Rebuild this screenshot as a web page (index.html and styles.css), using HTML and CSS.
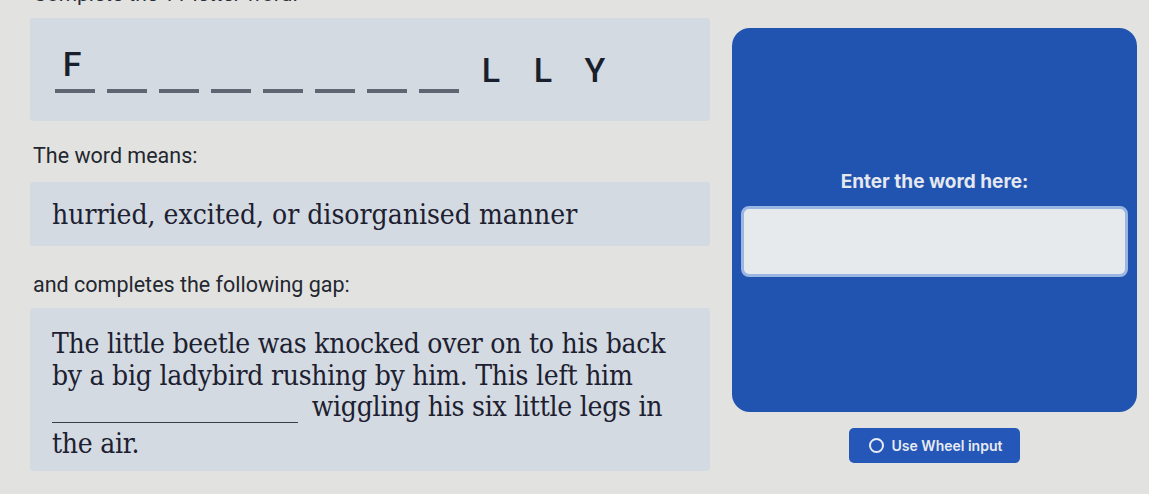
FILE: index.html
```html
<!DOCTYPE html>
<html lang="en">
<head>
<meta charset="utf-8">
<title>Word puzzle</title>
<link rel="stylesheet" href="styles.css">
</head>
<body>
<main class="page">
  <section class="left">
    <p class="intro">Complete the 11-letter word.</p>
    <div class="box word-box">
      <div class="slots">
        <span class="slot given first dashed">F</span>
        <span class="slot dashed"></span>
        <span class="slot dashed"></span>
        <span class="slot dashed"></span>
        <span class="slot dashed"></span>
        <span class="slot dashed"></span>
        <span class="slot dashed"></span>
        <span class="slot dashed"></span>
        <span class="slot given low">L</span>
        <span class="slot given low">L</span>
        <span class="slot given low">Y</span>
      </div>
    </div>
    <p class="label means">The word means:</p>
    <div class="box meaning">hurried, excited, or disorganised manner</div>
    <p class="label gap-label">and completes the following gap:</p>
    <div class="box passage">The little beetle was knocked over on to his back by a big ladybird rushing by him. This left him <span class="blank"></span> wiggling his six little legs in the air.</div>
  </section>
  <section class="right">
    <div class="panel">
      <label class="enter-label" for="answer">Enter the word here:</label>
      <input id="answer" class="answer" type="text" autocomplete="off">
    </div>
    <button class="wheel-btn" type="button"><span class="ring"></span>Use Wheel input</button>
  </section>
</main>
</body>
</html>
```

FILE: styles.css
```css
* { box-sizing: border-box; }
html, body { margin: 0; padding: 0; }
body {
  background: #e2e3e1;
  font-family: Roboto, "Liberation Sans", sans-serif;
  color: #1d2030;
  width: 1149px;
  height: 494px;
  overflow: hidden;
}
.page {
  display: grid;
  grid-template-columns: 680px 405px;
  column-gap: 22px;
  padding-left: 30px;
}
.left {
  display: flex;
  flex-direction: column;
}
.intro {
  margin: -16px 0 0 3px;
  font-size: 21px;
  line-height: 20px;
  height: 20px;
  color: #2a2d36;
}
.box {
  background: #d3dae1;
  border-radius: 3px;
}
.word-box {
  margin-top: 14px;
  height: 103px;
  padding: 28px 0 0 25px;
}
.slots {
  display: flex;
  gap: 12px;
  align-items: flex-start;
}
.slot {
  width: 40px;
  height: 47px;
  font-size: 34px;
  font-weight: 500;
  line-height: 34px;
  text-align: center;
  color: #1a1f2e;
}
.slot.first { padding-right: 6px; padding-top: 1px; }
.slot.dashed { border-bottom: 4px solid #5e6672; }
.slot.low { padding-top: 7px; }
.label {
  margin: 0 0 0 3px;
  font-size: 21.5px;
  line-height: 22px;
  color: #24272f;
}
.means { margin-top: 24px; }
.meaning {
  margin-top: 15px;
  height: 64px;
  padding: 0 0 0 22px;
  display: flex;
  align-items: center;
  font-family: "DejaVu Serif Condensed", "DejaVu Serif", serif;
  font-stretch: condensed;
  font-size: 28px;
}
.gap-label { margin-top: 28px; }
.passage {
  margin-top: 12px;
  height: 163px;
  padding: 20px 30px 0 22px;
  font-family: "DejaVu Serif Condensed", "DejaVu Serif", serif;
  font-stretch: condensed;
  font-size: 28px;
  line-height: 31.5px;
  letter-spacing: -0.25px;
}
.blank {
  display: inline-block;
  width: 246px;
  height: 0;
  border-bottom: 1px solid #3a3e48;
  margin-bottom: 5px;
  vertical-align: -12px;
  margin-right: 6px;
}
.right {
  display: flex;
  flex-direction: column;
  align-items: center;
}
.panel {
  margin-top: 28px;
  width: 405px;
  height: 384px;
  background: #2153b0;
  border-radius: 18px;
  display: flex;
  flex-direction: column;
  justify-content: center;
  align-items: center;
  padding: 6px 9px 0;
}
.enter-label {
  font-family: Inter, "Liberation Sans", sans-serif;
  font-weight: 700;
  font-size: 19px;
  color: #e4e8ef;
  margin-bottom: 13px;
}
.answer {
  width: 387px;
  height: 71px;
  background: #e7eaed;
  border: 3px solid #9ab6e3;
  border-radius: 8px;
  outline: none;
}
.wheel-btn {
  margin-top: 16px;
  width: 171px;
  height: 35px;
  background: #2457b8;
  border: none;
  border-radius: 5px;
  color: #e8ebf1;
  font-family: Inter, "Liberation Sans", sans-serif;
  font-weight: 600;
  font-size: 14px;
  display: flex;
  align-items: center;
  justify-content: center;
  gap: 8px;
  padding: 0 0 0 2px;
}
.ring {
  width: 15px;
  height: 15px;
  border: 2.5px solid #e8ebf1;
  border-radius: 50%;
}
```
